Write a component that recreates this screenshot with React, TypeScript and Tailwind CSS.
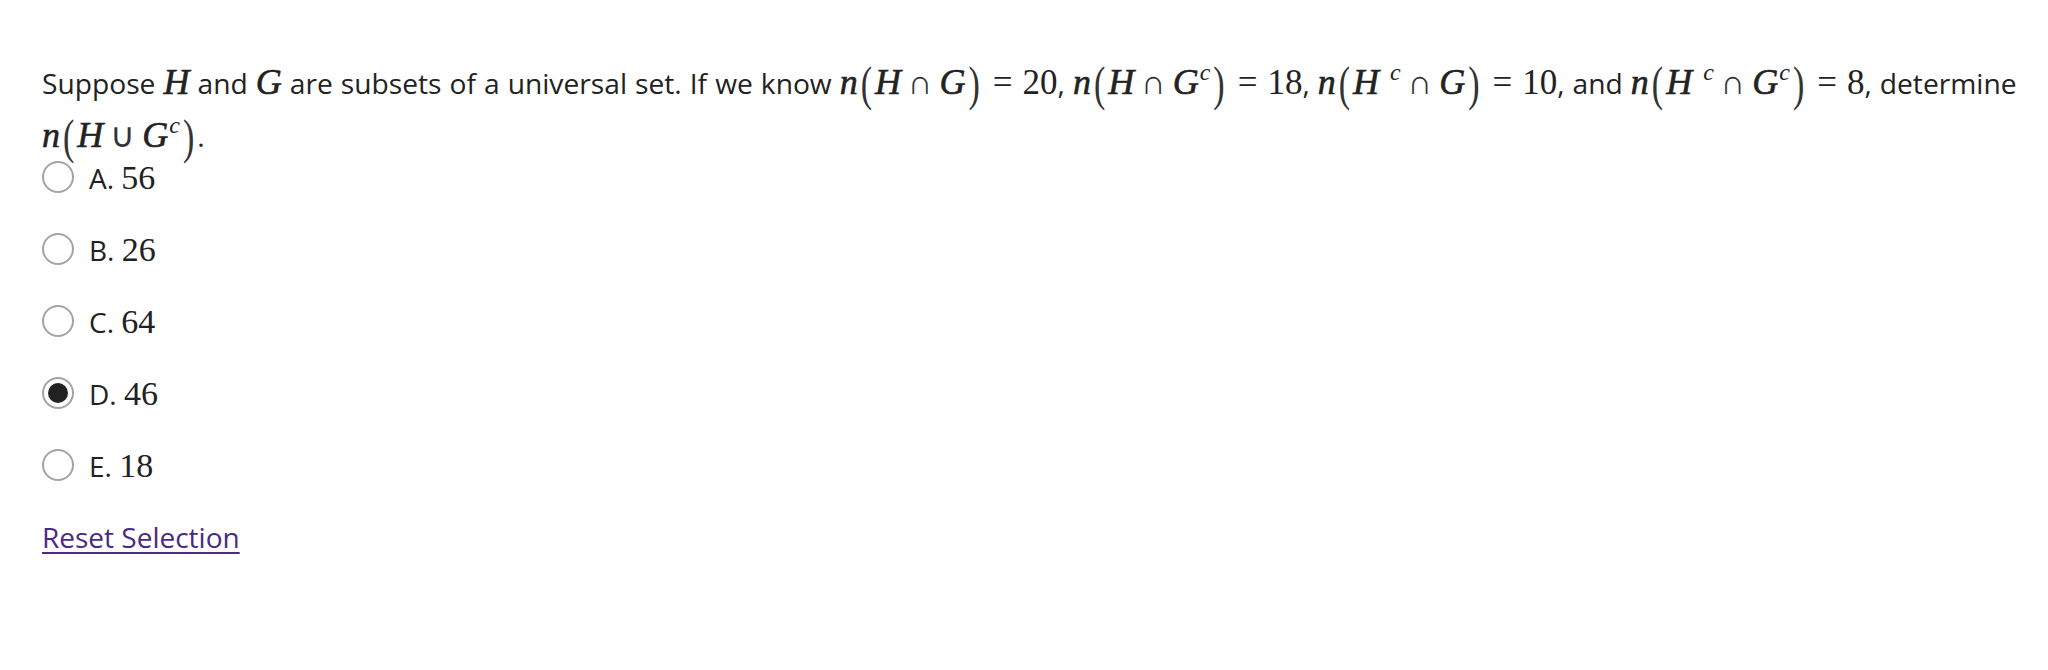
import React from "react";

const serif = "font-['Liberation_Serif',serif]";

function V({ children }: { children: React.ReactNode }) {
  return (
    <span className={`${serif} italic text-[36px] [-webkit-text-stroke:0.6px_#222]`}>{children}</span>
  );
}

function Num({ children }: { children: React.ReactNode }) {
  return <span className={`${serif} text-[35px]`}>{children}</span>;
}

function Paren({ side }: { side: "(" | ")" }) {
  return (
    <span
      className={`${serif} inline-block text-[34px] scale-y-[1.45] translate-y-[1px] text-[#333] mx-[3px]`}
    >
      {side}
    </span>
  );
}

function Sup({ gap = false }: { gap?: boolean }) {
  return (
    <span
      className={`${serif} italic text-[24px] relative -top-[14px] ${gap ? "ml-[11px]" : "ml-[1px]"}`}
    >
      c
    </span>
  );
}

function Op({ children }: { children: React.ReactNode }) {
  return (
    <span className="font-['DejaVu_Sans',sans-serif] text-[34px] font-extralight mx-[7px] text-[#333]">
      {children}
    </span>
  );
}

function Eq() {
  return <span className={`${serif} text-[35px] mx-[10px]`}>=</span>;
}

const options = [
  { letter: "A", value: "56", checked: false },
  { letter: "B", value: "26", checked: false },
  { letter: "C", value: "64", checked: false },
  { letter: "D", value: "46", checked: true },
  { letter: "E", value: "18", checked: false },
];

function Radio({ checked }: { checked: boolean }) {
  return (
    <span className="w-8 h-8 shrink-0 rounded-full border-2 border-[#a3a3a3] bg-white flex items-center justify-center">
      {checked && <span className="w-[20px] h-[20px] rounded-full bg-[#222]" />}
    </span>
  );
}

export default function App() {
  return (
    <div className="min-h-[670px] bg-white text-[#222] font-['Open_Sans',sans-serif] pl-[42px] pt-[58px]">
      <p className="text-[28.2px] leading-[49px] whitespace-nowrap [word-spacing:0.7px]">
        Suppose <V>H</V> and <V>G</V> are subsets of a universal set. If we know{" "}
        <V>n</V>
        <Paren side="(" />
        <V>H</V>
        <Op>∩</Op>
        <V>G</V>
        <Paren side=")" />
        <Eq />
        <Num>20</Num>, <V>n</V>
        <Paren side="(" />
        <V>H</V>
        <Op>∩</Op>
        <V>G</V>
        <Sup />
        <Paren side=")" />
        <Eq />
        <Num>18</Num>, <V>n</V>
        <Paren side="(" />
        <V>H</V>
        <Sup gap />
        <Op>∩</Op>
        <V>G</V>
        <Paren side=")" />
        <Eq />
        <Num>10</Num>, and <V>n</V>
        <Paren side="(" />
        <V>H</V>
        <Sup gap />
        <Op>∩</Op>
        <V>G</V>
        <Sup />
        <Paren side=")" />
        <Eq />
        <Num>8</Num>, determine
        <br />
        <V>n</V>
        <Paren side="(" />
        <V>H</V>
        <Op>∪</Op>
        <V>G</V>
        <Sup />
        <Paren side=")" />.
      </p>

      <div className="-mt-[7px] flex flex-col gap-[32px]">
        {options.map((o) => (
          <label key={o.letter} className="h-10 flex items-center gap-[15px] text-[28px]">
            <Radio checked={o.checked} />
            <span>
              {o.letter}. <span className={`${serif} text-[34px]`}>{o.value}</span>
            </span>
          </label>
        ))}
      </div>

      <div className="mt-[32px] leading-[40px] text-[28px]">
        <a href="#" className="text-[#4b2a84] underline underline-offset-[4px] decoration-[2px]">
          Reset Selection
        </a>
      </div>
    </div>
  );
}
